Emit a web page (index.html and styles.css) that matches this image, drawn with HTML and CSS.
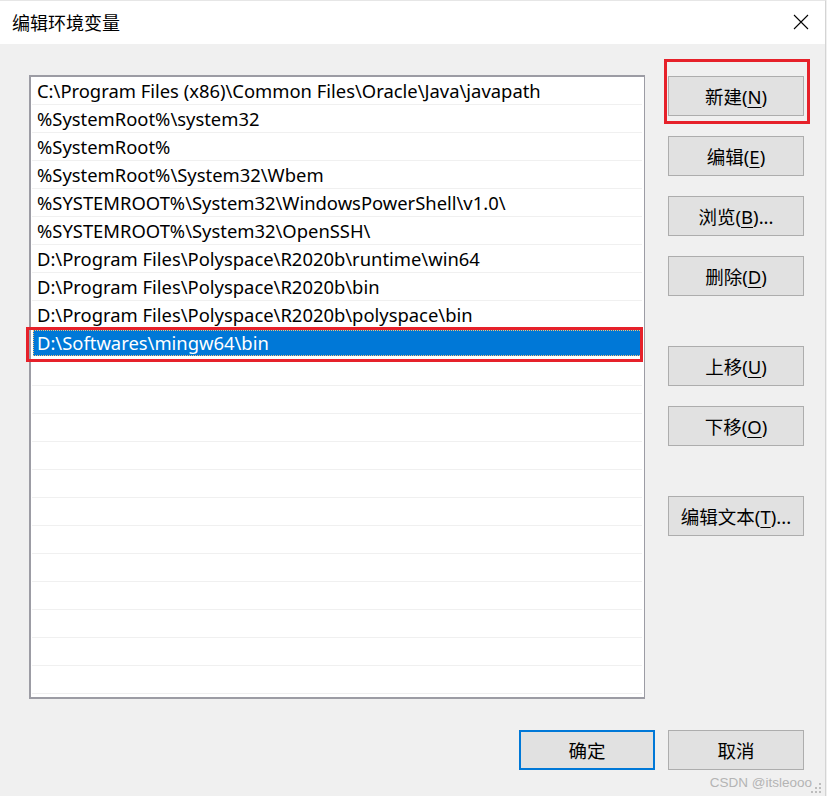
FILE: index.html
```html
<!DOCTYPE html>
<html lang="zh-CN">
<head>
<meta charset="utf-8">
<title>编辑环境变量</title>
<link rel="stylesheet" href="styles.css">
</head>
<body>
<div class="window">
  <div class="titlebar">
    <span class="title">编辑环境变量</span>
    <svg class="close" width="16" height="16" viewBox="0 0 16 16"><path d="M1 1 L15 15 M15 1 L1 15" stroke="#000" stroke-width="1.1" fill="none"/></svg>
  </div>
  <div class="body">
    <div class="main">
      <div class="list">
        <div class="row">C:\Program Files (x86)\Common Files\Oracle\Java\javapath</div>
        <div class="row">%SystemRoot%\system32</div>
        <div class="row">%SystemRoot%</div>
        <div class="row">%SystemRoot%\System32\Wbem</div>
        <div class="row">%SYSTEMROOT%\System32\WindowsPowerShell\v1.0\</div>
        <div class="row">%SYSTEMROOT%\System32\OpenSSH\</div>
        <div class="row">D:\Program Files\Polyspace\R2020b\runtime\win64</div>
        <div class="row">D:\Program Files\Polyspace\R2020b\bin</div>
        <div class="row">D:\Program Files\Polyspace\R2020b\polyspace\bin</div>
        <div class="row selected"><span class="sel">D:\Softwares\mingw64\bin</span><span class="mark mark-row"></span></div>
        <div class="row"></div>
        <div class="row"></div>
        <div class="row"></div>
        <div class="row"></div>
        <div class="row"></div>
        <div class="row"></div>
        <div class="row"></div>
        <div class="row"></div>
        <div class="row"></div>
        <div class="row"></div>
        <div class="row"></div>
        <div class="row"></div>
      </div>
      <div class="side">
        <div class="group">
          <button class="btn new">新建(<u>N</u>)<span class="mark mark-new"></span></button>
          <button class="btn">编辑(<u>E</u>)</button>
          <button class="btn">浏览(<u>B</u>)...</button>
          <button class="btn">删除(<u>D</u>)</button>
        </div>
        <div class="group">
          <button class="btn">上移(<u>U</u>)</button>
          <button class="btn">下移(<u>O</u>)</button>
        </div>
        <div class="group">
          <button class="btn">编辑文本(<u>T</u>)...</button>
        </div>
      </div>
    </div>
    <div class="footer">
      <button class="btn default">确定</button>
      <button class="btn">取消</button>
    </div>
    <div class="watermark">CSDN @itsleooo</div>
    <svg class="grip" width="10" height="10" viewBox="0 0 10 10">
      <rect x="8" y="0" width="2" height="2" fill="#bdbdbd"/>
      <rect x="4" y="4" width="2" height="2" fill="#bdbdbd"/>
      <rect x="8" y="4" width="2" height="2" fill="#bdbdbd"/>
      <rect x="0" y="8" width="2" height="2" fill="#bdbdbd"/>
      <rect x="4" y="8" width="2" height="2" fill="#bdbdbd"/>
      <rect x="8" y="8" width="2" height="2" fill="#bdbdbd"/>
    </svg>
  </div>
</div>
</body>
</html>
```
FILE: styles.css
```css
* { box-sizing: border-box; }
html, body { margin: 0; padding: 0; }
body {
  width: 827px;
  height: 796px;
  overflow: hidden;
  background: #f0f0f0;
  font-family: "Noto Sans", "Noto Sans CJK SC", sans-serif;
  color: #000;
}
.window {
  width: 826px;
  height: 796px;
  border-right: 1px solid #d4d4d4;
  border-top: 1px solid #e6e6e6;
  display: flex;
  flex-direction: column;
}
.titlebar {
  height: 43px;
  background: #fff;
  display: flex;
  align-items: center;
  justify-content: space-between;
  padding: 0 16px 0 12px;
}
.title {
  font-family: "Noto Sans CJK SC", sans-serif;
  font-size: 18px;
  line-height: 1;
  margin-top: -1px;
}
.close { display: block; margin-top: -1px; }
.body {
  flex: 1;
  position: relative;
  background: #f0f0f0;
}
.main {
  display: flex;
  padding: 31px 0 0 29px;
}
.list {
  width: 616px;
  height: 624px;
  background: #fff;
  border: 2px solid #9c9ca4;
  border-right-width: 1.5px;
  padding: 0 2px 0 1px;
}
.row {
  height: 28px;
  border-bottom: 1px solid #f0f0f0;
  font-size: 18.4px;
  line-height: 27px;
  padding-left: 5px;
  white-space: nowrap;
  position: relative;
}
.row.selected {
  padding: 0;
  border-bottom: 1px solid #fff;
}
.sel {
  display: block;
  margin: 1px 0 0 1px;
  height: 26px;
  line-height: 25px;
  background: #0078d7;
  color: #fff;
  padding-left: 4px;
  outline: 1px dotted #f3c27a;
  outline-offset: -1px;
}
.mark {
  position: absolute;
  border: 3px solid #e6212a;
  pointer-events: none;
}
.mark-row {
  left: -6px;
  top: -3px;
  width: 617px;
  height: 35px;
}
.side {
  margin-left: 23px;
  padding-top: 1px;
  display: flex;
  flex-direction: column;
  gap: 50px;
}
.group {
  display: flex;
  flex-direction: column;
  gap: 20px;
}
.btn {
  width: 136px;
  height: 40px;
  background: #e1e1e1;
  border: 1px solid #adadad;
  font-family: "Noto Sans", "Noto Sans CJK SC", sans-serif;
  font-size: 18.5px;
  color: #000;
  padding: 0;
  margin: 0;
  position: relative;
}
.btn u { text-decoration-thickness: 1px; text-underline-offset: 3px; }
.mark-new {
  left: -5px;
  top: -18px;
  width: 146px;
  height: 65px;
}
.btn.default {
  border: 2px solid #0078d7;
}
.footer {
  display: flex;
  justify-content: flex-end;
  gap: 13px;
  padding: 31px 21px 0 0;
}
.watermark {
  position: absolute;
  right: 13px;
  bottom: 6px;
  font-family: "Liberation Sans", sans-serif;
  font-size: 13.5px;
  color: #b4b4b4;
}
.grip {
  position: absolute;
  right: 4px;
  bottom: 3px;
}
```
